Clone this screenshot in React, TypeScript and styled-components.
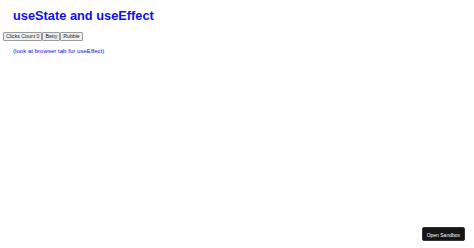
import React, { useState } from "react";
import styled, { createGlobalStyle } from "styled-components";

const Global = createGlobalStyle`
  html, body { margin: 0; padding: 0; background: #fff; }
  body { font-family: "Liberation Sans", Arial, sans-serif; }
`;

const Page = styled.div`
  display: flex;
  flex-direction: column;
  padding: 8px 3px 0;
  min-height: 248px;
  box-sizing: border-box;
`;

const Title = styled.h1`
  margin: 0 0 0 10px;
  font-size: 12.8px;
  line-height: 16px;
  font-weight: 700;
  color: #1010e8;
`;

const ButtonRow = styled.div`
  display: flex;
  margin-top: 8px;
`;

const Btn = styled.button`
  font-family: "Liberation Sans", Arial, sans-serif;
  font-size: 5.2px;
  line-height: 7px;
  height: 9px;
  padding: 0 2px;
  margin: 0;
  border: 1px solid #9a9a9a;
  border-radius: 1px;
  background: #efefef;
  color: #222;
`;

const Note = styled.p`
  margin: 6px 0 0 10px;
  font-size: 6.1px;
  line-height: 8px;
  color: #1010e8;
`;

const Sandbox = styled.a`
  position: fixed;
  right: 9px;
  bottom: 7px;
  background: #151515;
  color: #fff;
  font-size: 5px;
  line-height: 14px;
  height: 14px;
  padding: 0 4px;
  border-radius: 2px;
  border: 1px solid #333;
  box-sizing: border-box;
  text-decoration: none;
`;

export default function App() {
  const [count, setCount] = useState(0);
  return (
    <>
      <Global />
      <Page>
        <Title>useState and useEffect</Title>
        <ButtonRow>
          <Btn onClick={() => setCount(count + 1)}>Clicks Count {count}</Btn>
          <Btn>Betty</Btn>
          <Btn>Rubble</Btn>
        </ButtonRow>
        <Note>(look at browser tab for useEffect)</Note>
      </Page>
      <Sandbox href="#">Open Sandbox</Sandbox>
    </>
  );
}
